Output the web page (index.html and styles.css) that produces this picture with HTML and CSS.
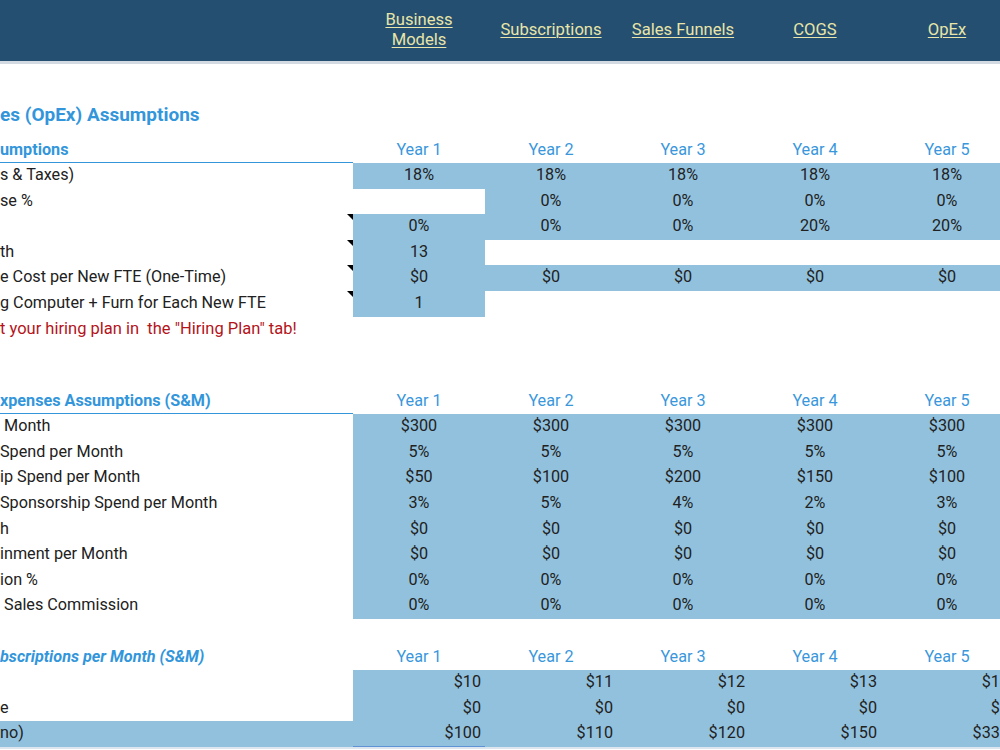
FILE: index.html
```html
<!DOCTYPE html>
<html>
<head>
<meta charset="utf-8">
<link rel="stylesheet" href="styles.css">
</head>
<body>
<header class="topbar">
  <div></div>
  <a class="nav">Business<br>Models</a>
  <a class="nav">Subscriptions</a>
  <a class="nav">Sales Funnels</a>
  <a class="nav">COGS</a>
  <a class="nav">OpEx</a>
</header>

<h1 class="title">es (OpEx) Assumptions</h1>

<section class="block b1">
  <div class="row head">
    <div class="lab hl">umptions</div>
    <div class="yr">Year 1</div><div class="yr">Year 2</div><div class="yr">Year 3</div><div class="yr">Year 4</div><div class="yr">Year 5</div>
  </div>
  <div class="row">
    <div class="lab">s &amp; Taxes)</div>
    <div class="c f">18%</div><div class="c f">18%</div><div class="c f">18%</div><div class="c f">18%</div><div class="c f">18%</div>
  </div>
  <div class="row">
    <div class="lab">se %</div>
    <div class="c"></div><div class="c f">0%</div><div class="c f">0%</div><div class="c f">0%</div><div class="c f">0%</div>
  </div>
  <div class="row">
    <div class="lab note"></div>
    <div class="c f">0%</div><div class="c f">0%</div><div class="c f">0%</div><div class="c f">20%</div><div class="c f">20%</div>
  </div>
  <div class="row">
    <div class="lab note">th</div>
    <div class="c f">13</div><div class="c"></div><div class="c"></div><div class="c"></div><div class="c"></div>
  </div>
  <div class="row">
    <div class="lab note">e Cost per New FTE (One-Time)</div>
    <div class="c f">$0</div><div class="c f">$0</div><div class="c f">$0</div><div class="c f">$0</div><div class="c f">$0</div>
  </div>
  <div class="row">
    <div class="lab note">g Computer + Furn for Each New FTE</div>
    <div class="c f">1</div><div class="c"></div><div class="c"></div><div class="c"></div><div class="c"></div>
  </div>
  <div class="row">
    <div class="lab red">t your hiring plan in&nbsp; the "Hiring Plan" tab!</div>
  </div>
</section>

<section class="block b2">
  <div class="row head">
    <div class="lab hl">xpenses Assumptions (S&amp;M)</div>
    <div class="yr">Year 1</div><div class="yr">Year 2</div><div class="yr">Year 3</div><div class="yr">Year 4</div><div class="yr">Year 5</div>
  </div>
  <div class="row">
    <div class="lab">&nbsp;Month</div>
    <div class="c f">$300</div><div class="c f">$300</div><div class="c f">$300</div><div class="c f">$300</div><div class="c f">$300</div>
  </div>
  <div class="row">
    <div class="lab">Spend per Month</div>
    <div class="c f">5%</div><div class="c f">5%</div><div class="c f">5%</div><div class="c f">5%</div><div class="c f">5%</div>
  </div>
  <div class="row">
    <div class="lab">ip Spend per Month</div>
    <div class="c f">$50</div><div class="c f">$100</div><div class="c f">$200</div><div class="c f">$150</div><div class="c f">$100</div>
  </div>
  <div class="row">
    <div class="lab">Sponsorship Spend per Month</div>
    <div class="c f">3%</div><div class="c f">5%</div><div class="c f">4%</div><div class="c f">2%</div><div class="c f">3%</div>
  </div>
  <div class="row">
    <div class="lab">h</div>
    <div class="c f">$0</div><div class="c f">$0</div><div class="c f">$0</div><div class="c f">$0</div><div class="c f">$0</div>
  </div>
  <div class="row">
    <div class="lab">inment per Month</div>
    <div class="c f">$0</div><div class="c f">$0</div><div class="c f">$0</div><div class="c f">$0</div><div class="c f">$0</div>
  </div>
  <div class="row">
    <div class="lab">ion %</div>
    <div class="c f">0%</div><div class="c f">0%</div><div class="c f">0%</div><div class="c f">0%</div><div class="c f">0%</div>
  </div>
  <div class="row">
    <div class="lab">&nbsp;Sales Commission</div>
    <div class="c f">0%</div><div class="c f">0%</div><div class="c f">0%</div><div class="c f">0%</div><div class="c f">0%</div>
  </div>
</section>

<section class="block b3">
  <div class="row head">
    <div class="lab hl it">bscriptions per Month (S&amp;M)</div>
    <div class="yr">Year 1</div><div class="yr">Year 2</div><div class="yr">Year 3</div><div class="yr">Year 4</div><div class="yr">Year 5</div>
  </div>
  <div class="row">
    <div class="lab"></div>
    <div class="c f r">$10</div><div class="c f r">$11</div><div class="c f r">$12</div><div class="c f r">$13</div><div class="c f r">$14</div>
  </div>
  <div class="row">
    <div class="lab">e</div>
    <div class="c f r">$0</div><div class="c f r">$0</div><div class="c f r">$0</div><div class="c f r">$0</div><div class="c f r">$0</div>
  </div>
  <div class="row last">
    <div class="lab f">no)</div>
    <div class="c f r sel">$100</div><div class="c f r">$110</div><div class="c f r">$120</div><div class="c f r">$150</div><div class="c f r">$330</div>
  </div>
</section>
</body>
</html>
```

FILE: styles.css
```css
html, body {
  margin: 0;
  padding: 0;
  background: #ffffff;
  overflow: hidden;
  width: 1000px;
  height: 750px;
}

body {
  font-family: Roboto, "Liberation Sans", Arial, sans-serif;
  font-size: 16.2px;
  color: #212121;
}

.topbar {
  display: grid;
  grid-template-columns: 353px repeat(5, 132px);
  width: 1013px;
  height: 61px;
  background: #244f70;
  border-bottom: 3px solid #d3dae2;
  align-items: center;
}

.nav {
  color: #e9e5a8;
  text-decoration: underline;
  text-underline-offset: 2px;
  text-decoration-thickness: 1px;
  text-align: center;
  line-height: 20px;
  font-size: 16.6px;
  padding-bottom: 1px;
}

.title {
  margin: 37px 0 0 0;
  height: 26px;
  line-height: 27px;
  font-size: 19px;
  font-weight: bold;
  color: #3396db;
  white-space: nowrap;
}

.block {
  width: 1013px;
}

.b1 { margin-top: 10px; }
.b2 { margin-top: 46px; }
.b3 { margin-top: 25px; }

.row {
  display: grid;
  grid-template-columns: 353px repeat(5, 132px);
  height: 25.6px;
  line-height: 24.6px;
}

.row.head {
  height: 26px;
  line-height: 25px;
}

.lab {
  position: relative;
  white-space: nowrap;
  overflow: visible;
  padding-left: 0;
}

.hl {
  color: #3396db;
  font-weight: bold;
  border-bottom: 1px solid #3396db;
  line-height: 25px;
}

.b3 .hl {
  border-bottom: none;
}

.it {
  font-style: italic;
}

.yr {
  color: #3a97dc;
  text-align: center;
}

.c {
  text-align: center;
}

.c.r {
  text-align: right;
  padding-right: 4px;
}

.f {
  background: #92c1de;
}

.red {
  color: #b3141a;
  font-size: 16.5px;
}

.note::after {
  content: "";
  position: absolute;
  top: 0;
  right: 0;
  width: 0;
  height: 0;
  border-top: 6px solid #000000;
  border-left: 6px solid transparent;
}

.row.last {
  border-bottom: 2px solid #dde6ee;
}

.sel {
  box-shadow: inset 0 -1px 0 #5f93d6;
}
```
